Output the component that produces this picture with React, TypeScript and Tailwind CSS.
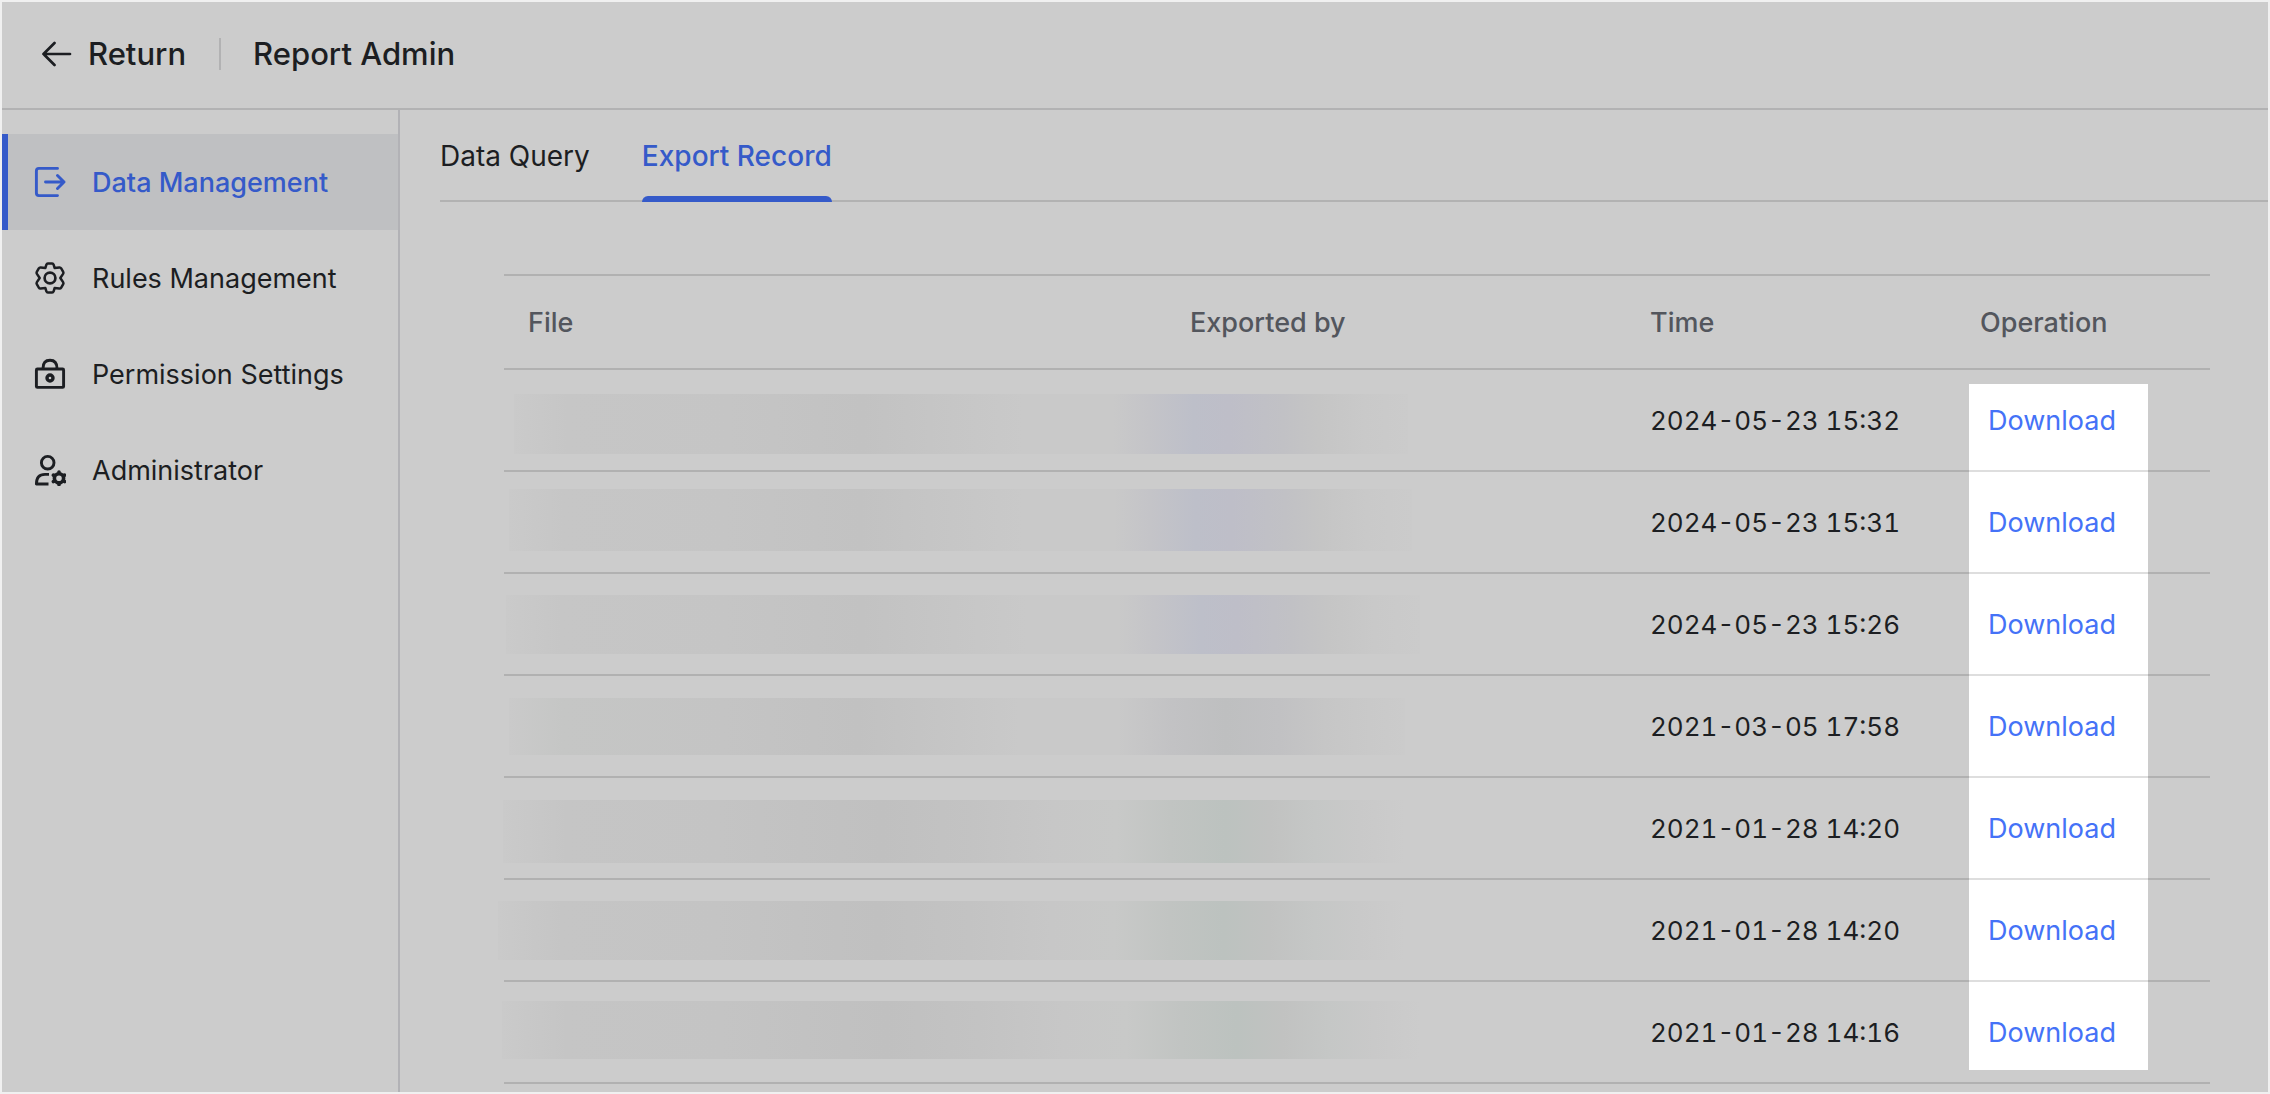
import type { ReactNode } from "react";

type Smudge = { left: number; right: number; top: number; height: number; fill: string };

const violet = "linear-gradient(90deg,#cacaca 0%,#c6c6c6 6%,#c5c5c5 24%,#c2c2c2 39%,#c6c6c6 49%,#c9c9c9 57%,#c9c9c9 67%,#c4c4c8 71%,#bdbfc9 76%,#bebec8 80%,#c1c1c5 86%,#c5c5c5 90%,#c9c9c9 95%,#cbcbcb 100%)";
const gray = "linear-gradient(90deg,#cacaca 0%,#c5c6c5 6%,#c4c4c4 24%,#c1c1c1 39%,#c5c5c5 48%,#c9c9c9 57%,#c9c9c9 68%,#c2c2c4 74%,#bebfc0 80%,#c1c1c3 86%,#c6c6c6 91%,#c9c9c9 96%,#cbcbcb 100%)";
const green = "linear-gradient(90deg,#cacaca 0%,#c5c5c5 7%,#c4c4c4 24%,#c0c0c0 42%,#c3c3c3 52%,#c7c7c7 61%,#c8c9c8 68%,#c1c4c2 74%,#bcc2bf 80%,#c1c2c1 85%,#c5c7c6 90%,#c9c9c9 95%,#cccccc 100%)";

const records: { time: string; smudge: Smudge }[] = [
  { time: "2024-05-23 15:32", smudge: { left: 10, right: 1408, top: 24, height: 60, fill: violet } },
  { time: "2024-05-23 15:31", smudge: { left: 5, right: 1412, top: 17, height: 62, fill: violet } },
  { time: "2024-05-23 15:26", smudge: { left: 2, right: 1420, top: 21, height: 59, fill: violet } },
  { time: "2021-03-05 17:58", smudge: { left: 5, right: 1405, top: 22, height: 57, fill: gray } },
  { time: "2021-01-28 14:20", smudge: { left: -1, right: 1405, top: 22, height: 63, fill: green } },
  { time: "2021-01-28 14:20", smudge: { left: -6, right: 1405, top: 21, height: 59, fill: green } },
  { time: "2021-01-28 14:16", smudge: { left: -2, right: 1420, top: 19, height: 58, fill: green } },
];

const TABLE_LEFT = 504;

function Icon({ children }: { children: ReactNode }) {
  return (
    <svg viewBox="0 0 32 32" className="size-8 shrink-0" fill="none" stroke="currentColor" strokeWidth="2.9" strokeLinejoin="round" strokeLinecap="round" aria-hidden="true">
      {children}
    </svg>
  );
}

const gearPath =
  "M11.4 5.9 L12.4 2.7 Q12.8 1.5 13.9 1.5 H18.1 Q19.2 1.5 19.6 2.7 L20.6 5.9 L25.3 5.4 Q26.6 5.3 27.2 6.3 L29.2 9.8 Q29.8 10.9 29.1 11.9 L26.3 16 L29.1 20.1 Q29.8 21.1 29.2 22.2 L27.2 25.7 Q26.6 26.7 25.3 26.6 L20.6 26.1 L19.6 29.3 Q19.2 30.5 18.1 30.5 H13.9 Q12.8 30.5 12.4 29.3 L11.4 26.1 L6.7 26.6 Q5.4 26.7 4.8 25.7 L2.8 22.2 Q2.2 21.1 2.9 20.1 L5.7 16 L2.9 11.9 Q2.2 10.9 2.8 9.8 L4.8 6.3 Q5.4 5.3 6.7 5.4 Z";

const navItems: { label: string; active?: boolean; icon: ReactNode }[] = [
  {
    label: "Data Management",
    active: true,
    icon: (
      <Icon>
        <path d="M23.5 2.4 H4.9 Q2.4 2.4 2.4 4.9 V27.1 Q2.4 29.6 4.9 29.6 H23.5" />
        <path d="M11.5 16 H30 M23.5 9.5 L30 16 L23.5 22.5" />
      </Icon>
    ),
  },
  {
    label: "Rules Management",
    icon: (
      <Icon>
        <path d={gearPath} strokeWidth="2.5" />
        <circle cx="16" cy="16" r="5.4" strokeWidth="2.7" />
      </Icon>
    ),
  },
  {
    label: "Permission Settings",
    icon: (
      <Icon>
        <rect x="2.4" y="11" width="27.2" height="18.4" rx="1" />
        <path d="M9 10.5 Q9 2.3 16 2.3 Q23 2.3 23 10.5" />
        <circle cx="16" cy="20" r="3" strokeWidth="3.4" />
      </Icon>
    ),
  },
  {
    label: "Administrator",
    icon: (
      <Icon>
        <circle cx="13.7" cy="8.7" r="6.3" />
        <path d="M15 20.4 H11 Q2.4 20.4 2.4 30 H14.5" strokeLinecap="butt" />
        <circle cx="25" cy="24.3" r="4.6" strokeWidth="3.6" />
        <path d="M25 18.6 V18 M25 30 V30.6 M19.9 21.4 L19.4 21.1 M30.1 21.4 L30.6 21.1 M19.9 27.2 L19.4 27.5 M30.1 27.2 L30.6 27.5" strokeWidth="3.6" />
      </Icon>
    ),
  },
];

export default function App() {
  return (
    <div className="flex h-screen flex-col overflow-hidden border-2 border-[#f0f0f0] bg-[#cccccc] font-['Inter',sans-serif] text-[27px] leading-10 text-[#1c1e22]">
      <header className="flex h-27 shrink-0 items-center border-b-2 border-[#b2b2b3] px-10 pb-0.5 text-[31px] font-medium">
        <button type="button" className="flex items-center gap-3.5">
          <svg viewBox="0 0 32 32" className="size-8" fill="none" stroke="currentColor" strokeWidth="2.7" strokeLinecap="round" strokeLinejoin="round" aria-hidden="true">
            <path d="M28 16 H1.5 M12.5 5 L1.5 16 L12.5 27" />
          </svg>
          <span>Return</span>
        </button>
        <div className="ml-[33px] h-8 w-0.5 bg-[#b2b2b3]" />
        <h1 className="ml-8">Report Admin</h1>
      </header>

      <div className="flex min-h-0 flex-1">
        <aside className="w-[398px] shrink-0 border-r-2 border-[#b2b2b6] pt-6">
          <nav>
            {navItems.map((item) => (
              <a
                key={item.label}
                href="#"
                aria-current={item.active ? "page" : undefined}
                className={
                  item.active
                    ? "flex h-24 items-center gap-6.5 border-l-6 border-[#355ac9] bg-[#bfc0c2] pl-6.5 font-medium text-[#355ac9]"
                    : "flex h-24 items-center gap-6.5 border-l-6 border-transparent pl-6.5"
                }
              >
                {item.icon}
                <span className="pt-0.5">{item.label}</span>
              </a>
            ))}
          </nav>
        </aside>

        <main className="min-w-0 flex-1 pl-10">
          <div role="tablist" className="flex h-23 gap-13 border-b-2 border-[#b2b2b2] text-[28px]">
            <button type="button" role="tab" aria-selected="false" className="-mb-0.5">
              Data Query
            </button>
            <button type="button" role="tab" aria-selected="true" className="relative -mb-0.5 font-medium text-[#355ac9]">
              Export Record
              <span className="absolute inset-x-0 bottom-0 h-1.5 rounded-t-md bg-[#355ac9]" />
            </button>
          </div>

          <div className="relative isolate mt-18 mr-[58px] ml-16">
            <div className="absolute top-[110px] right-[62px] bottom-3.5 -z-10 w-[179px] bg-white" />
            <table className="w-full table-fixed border-separate border-spacing-0 border-t-2 border-black/13 text-left">
              <colgroup>
                <col />
                <col className="w-[460px]" />
                <col className="w-[330px]" />
                <col className="w-[254px]" />
              </colgroup>
              <thead>
                <tr className="h-[94px] text-[#53565d]">
                  <th className="border-b-2 border-black/13 px-6 pt-0.5 font-medium">File</th>
                  <th className="border-b-2 border-black/13 px-6 pt-0.5 font-medium">Exported by</th>
                  <th className="border-b-2 border-black/13 px-6 pt-0.5 font-medium">Time</th>
                  <th className="border-b-2 border-black/13 px-6 pt-0.5 font-medium">Operation</th>
                </tr>
              </thead>
              <tbody>
                {records.map(({ time, smudge }, i) => (
                  <tr key={i} className="h-[102px]">
                    <td colSpan={2} className="relative border-b-2 border-black/13">
                      <div
                        className="absolute"
                        style={{
                          left: smudge.left,
                          width: smudge.right - TABLE_LEFT - smudge.left,
                          top: smudge.top,
                          height: smudge.height,
                          background: smudge.fill,
                        }}
                      />
                    </td>
                    <td className="border-b-2 border-black/13 px-6 pt-0.5 text-[26px] tabular-nums">{time}</td>
                    <td className="border-b-2 border-black/13 px-8 pt-0.5">
                      <a href="#" className="text-[#4572f7]">
                        Download
                      </a>
                    </td>
                  </tr>
                ))}
              </tbody>
            </table>
          </div>
        </main>
      </div>
    </div>
  );
}
